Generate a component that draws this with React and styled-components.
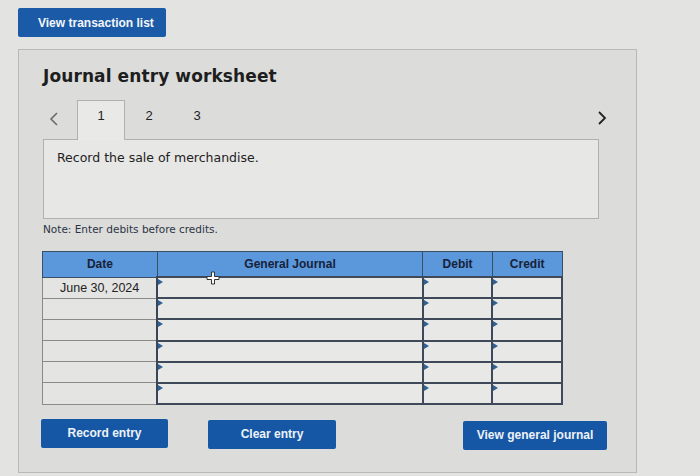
import styled, { createGlobalStyle } from "styled-components";

const GlobalStyle = createGlobalStyle`
  html, body {
    margin: 0;
    padding: 0;
    background: #e3e3e1;
    font-family: "Liberation Sans", Arial, sans-serif;
  }
`;

const rows = ["June 30, 2024", "", "", "", "", ""];

const App = () => {
  return (
    <>
      <GlobalStyle />
      <Page>
        <TopButton>View transaction list</TopButton>
        <Panel>
          <Title>Journal entry worksheet</Title>
          <TabBar>
            <Arrow>
              <svg width="10" height="16" viewBox="0 0 10 16">
                <path d="M8 2 L2 8 L8 14" fill="none" stroke="#6b6b6b" strokeWidth="1.6" />
              </svg>
            </Arrow>
            <Tab $active>1</Tab>
            <Tab>2</Tab>
            <Tab>3</Tab>
            <Spacer />
            <Arrow $right>
              <svg width="10" height="16" viewBox="0 0 10 16">
                <path d="M2 2 L8 8 L2 14" fill="none" stroke="#222" strokeWidth="1.8" />
              </svg>
            </Arrow>
          </TabBar>
          <ContentBox>Record the sale of merchandise.</ContentBox>
          <Note>Note: Enter debits before credits.</Note>
          <TableWrap>
            <Table>
              <colgroup>
                <col style={{ width: "22.1%" }} />
                <col style={{ width: "51.1%" }} />
                <col style={{ width: "13.4%" }} />
                <col style={{ width: "13.4%" }} />
              </colgroup>
              <thead>
                <tr>
                  <Th>Date</Th>
                  <Th>General Journal</Th>
                  <Th>Debit</Th>
                  <Th>Credit</Th>
                </tr>
              </thead>
              <tbody>
                {rows.map((d, i) => (
                  <tr key={i}>
                    <DateCell>{d}</DateCell>
                    <InputCell />
                    <InputCell />
                    <InputCell />
                  </tr>
                ))}
              </tbody>
            </Table>
            <Cursor>
              <svg width="14" height="14" viewBox="0 0 14 14">
                <path
                  d="M5.5 1 H8.5 V5.5 H13 V8.5 H8.5 V13 H5.5 V8.5 H1 V5.5 H5.5 Z"
                  fill="#fff"
                  stroke="#333"
                  strokeWidth="1"
                />
              </svg>
            </Cursor>
          </TableWrap>
          <ButtonRow>
            <ActionButton $w={127}>Record entry</ActionButton>
            <ActionButton $w={128} $ml={40} $mt={1}>Clear entry</ActionButton>
            <ActionButton $w={144} $ml={127} $mt={2}>View general journal</ActionButton>
          </ButtonRow>
        </Panel>
      </Page>
    </>
  );
};

export default App;

const Page = styled.div`
  width: 700px;
  height: 476px;
  padding: 8px 0 0 18px;
  box-sizing: border-box;
  overflow: hidden;
`;

const TopButton = styled.button`
  display: block;
  width: 148px;
  height: 29px;
  background: #1b5aa6;
  border: none;
  border-radius: 2px;
  color: #f4f6fa;
  font-family: "Liberation Sans", Arial, sans-serif;
  font-weight: 700;
  font-size: 12px;
  text-align: left;
  padding: 0 0 0 20px;
`;

const Panel = styled.div`
  margin-top: 12px;
  width: 619px;
  height: 424px;
  box-sizing: border-box;
  border: 1px solid #b9b9b7;
  background: #dcdcda;
  padding: 16px 0 0 24px;
`;

const Title = styled.h1`
  margin: 0;
  font-family: "DejaVu Sans", Verdana, sans-serif;
  font-weight: 700;
  font-size: 17px;
  color: #1e1e1e;
  letter-spacing: 0.1px;
`;

const TabBar = styled.div`
  display: flex;
  align-items: flex-end;
  margin-top: 13px;
  width: 556px;
  height: 40px;
`;

const Arrow = styled.div`
  width: ${(p) => (p.$right ? "24px" : "34px")};
  height: 40px;
  display: flex;
  align-items: center;
  justify-content: ${(p) => (p.$right ? "flex-end" : "flex-start")};
  padding-left: ${(p) => (p.$right ? "0" : "6px")};
  margin-right: ${(p) => (p.$right ? "-8px" : "0")};
  box-sizing: border-box;
  svg {
    margin-top: ${(p) => (p.$right ? "-2px" : "0")};
  }
`;

const Tab = styled.div`
  width: 48px;
  height: 40px;
  box-sizing: border-box;
  display: flex;
  align-items: center;
  justify-content: center;
  padding-bottom: 10px;
  font-size: 13px;
  color: #222;
  border: ${(p) => (p.$active ? "1px solid #b0b0ae" : "1px solid transparent")};
  border-bottom: none;
  background: ${(p) => (p.$active ? "#e9e9e7" : "transparent")};
  position: relative;
  margin-bottom: -1px;
  z-index: 1;
`;

const Spacer = styled.div`
  flex: 1;
`;

const ContentBox = styled.div`
  width: 556px;
  height: 80px;
  box-sizing: border-box;
  border: 1px solid #b0b0ae;
  background: #e7e7e5;
  padding: 10px 0 0 13px;
  font-family: "DejaVu Sans", Verdana, sans-serif;
  font-size: 12.5px;
  color: #222;
`;

const Note = styled.div`
  margin-top: 4px;
  font-family: "DejaVu Sans", Verdana, sans-serif;
  font-size: 10.5px;
  color: #2b3445;
`;

const TableWrap = styled.div`
  position: relative;
  margin-top: 16px;
  margin-left: -1px;
  width: 521px;
`;

const Table = styled.table`
  border-collapse: collapse;
  table-layout: fixed;
  width: 521px;
`;

const Th = styled.th`
  height: 24px;
  padding: 0;
  background: #5a97db;
  border: 1.5px solid #3a4e66;
  color: #17223a;
  font-size: 12px;
  font-weight: 700;
`;

const DateCell = styled.td`
  height: 20.2px;
  padding: 0;
  background: #e4e4e2;
  border: 1px solid #8a8a8a;
  border-right: 2px solid #3a4656;
  text-align: center;
  font-size: 12.5px;
  color: #222;
`;

const InputCell = styled.td`
  height: 19.2px;
  padding: 0;
  background: #e8e8e6;
  border: 2.5px solid #3e4a5a;
  border-top-width: 2px;
  position: relative;

  &::before {
    content: "";
    position: absolute;
    top: 1px;
    left: 0;
    border-top: 3px solid transparent;
    border-bottom: 3px solid transparent;
    border-left: 5px solid #2e5f95;
  }
`;

const Cursor = styled.div`
  position: absolute;
  left: 164px;
  top: 20px;
  line-height: 0;
`;

const ButtonRow = styled.div`
  display: flex;
  align-items: flex-start;
  margin-top: 14px;
  margin-left: -2px;
`;

const ActionButton = styled.button`
  width: ${(p) => p.$w}px;
  height: 29px;
  margin-left: ${(p) => p.$ml || 0}px;
  margin-top: ${(p) => p.$mt || 0}px;
  background: #1657a5;
  border: none;
  border-radius: 2px;
  color: #eef2f8;
  font-family: "Liberation Sans", Arial, sans-serif;
  font-weight: 700;
  font-size: 12px;
  padding: 0;
  padding-bottom: 2px;
`;
